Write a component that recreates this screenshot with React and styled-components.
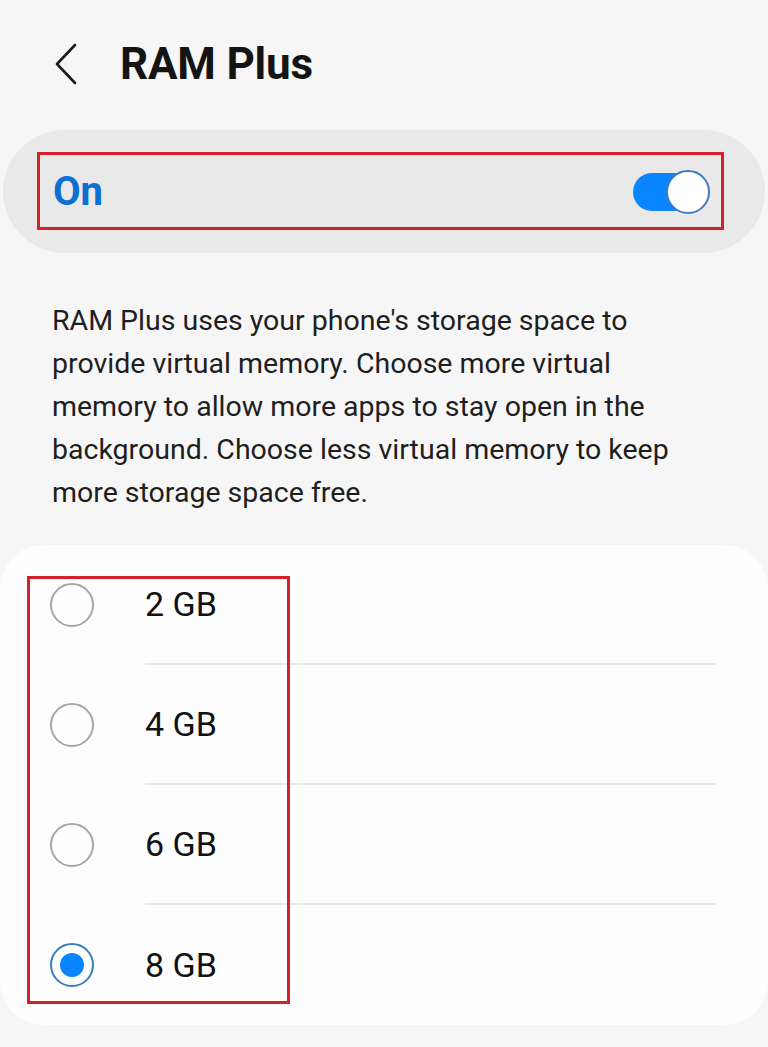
import React from "react";
import styled, { createGlobalStyle } from "styled-components";

const GlobalStyle = createGlobalStyle`
  html, body {
    margin: 0;
    padding: 0;
    background: #f6f6f6;
  }
  body {
    font-family: Roboto, "Noto Sans", "Liberation Sans", sans-serif;
    color: #1b1b1b;
  }
`;

const options = ["2 GB", "4 GB", "6 GB", "8 GB"];

const App = () => {
  const selected = "8 GB";

  return (
    <Page>
      <GlobalStyle />
      <Header>
        <BackButton aria-label="Back">
          <svg width="24" height="42" viewBox="0 0 24 42" fill="none">
            <path
              d="M21 2 L3 21 L21 40"
              stroke="#1b1b1b"
              strokeWidth="2.6"
              strokeLinecap="round"
              strokeLinejoin="round"
            />
          </svg>
        </BackButton>
        <Title>RAM Plus</Title>
      </Header>

      <TogglePill>
        <OnLabel>On</OnLabel>
        <Switch>
          <Thumb />
        </Switch>
        <Annotation $top={22} $left={34} $width={687} $height={78} />
      </TogglePill>

      <Description>
        RAM Plus uses your phone's storage space to provide virtual memory.
        Choose more virtual memory to allow more apps to stay open in the
        background. Choose less virtual memory to keep more storage space free.
      </Description>

      <OptionsCard>
        {options.map((label, i) => (
          <OptionRow key={label}>
            <RadioCell>
              <Radio $checked={label === selected} />
            </RadioCell>
            <OptionLabel $last={i === options.length - 1}>{label}</OptionLabel>
          </OptionRow>
        ))}
        <Annotation $top={31} $left={27} $width={263} $height={428} />
      </OptionsCard>
    </Page>
  );
};

export default App;

const Page = styled.div`
  width: 768px;
  min-height: 1047px;
  display: flex;
  flex-direction: column;
  background: #f6f6f6;
`;

const Header = styled.div`
  height: 128px;
  display: flex;
  align-items: center;
  padding-left: 54px;
`;

const BackButton = styled.div`
  width: 24px;
  height: 42px;
  display: flex;
  margin-right: 42px;
`;

const Title = styled.h1`
  margin: 0;
  font-size: 44px;
  font-weight: 700;
  color: #141414;
  letter-spacing: -0.2px;
`;

const TogglePill = styled.div`
  position: relative;
  height: 123px;
  margin: 2px 3px 0;
  border-radius: 62px;
  background: #e9e9e9;
  display: flex;
  align-items: center;
  justify-content: space-between;
  padding: 0 55px 0 50px;
`;

const OnLabel = styled.span`
  font-size: 40px;
  font-weight: 700;
  color: #0d6fd1;
`;

const Switch = styled.div`
  width: 72px;
  height: 38px;
  border-radius: 19px;
  background: #0a84ff;
  display: flex;
  align-items: center;
  justify-content: flex-end;
  margin-right: 5px;
`;

const Thumb = styled.div`
  width: 40px;
  height: 40px;
  border-radius: 50%;
  background: #fff;
  border: 2px solid #3f7dbd;
  margin-right: -5px;
  flex-shrink: 0;
`;

const Annotation = styled.div`
  position: absolute;
  top: ${(p) => p.$top}px;
  left: ${(p) => p.$left}px;
  width: ${(p) => p.$width}px;
  height: ${(p) => p.$height}px;
  border: 3px solid #d3222c;
  box-sizing: border-box;
  pointer-events: none;
`;

const Description = styled.p`
  margin: 46px 0 0;
  padding: 0 52px;
  font-size: 28.5px;
  line-height: 43px;
  color: #1e1e1e;
`;

const OptionsCard = styled.div`
  position: relative;
  margin-top: 31px;
  background: #fdfdfd;
  border-radius: 44px;
`;

const OptionRow = styled.div`
  height: 120px;
  display: flex;
  align-items: stretch;
`;

const RadioCell = styled.div`
  width: 145px;
  display: flex;
  align-items: center;
  padding-left: 50px;
  box-sizing: border-box;
`;

const Radio = styled.div`
  width: 44px;
  height: 44px;
  border-radius: 50%;
  box-sizing: border-box;
  border: 2px solid ${(p) => (p.$checked ? "#3a7cbd" : "#a6a6a6")};
  display: flex;
  align-items: center;
  justify-content: center;

  &::after {
    content: "";
    display: ${(p) => (p.$checked ? "block" : "none")};
    width: 24px;
    height: 24px;
    border-radius: 50%;
    background: #0a84ff;
  }
`;

const OptionLabel = styled.div`
  flex: 1;
  margin-right: 52px;
  display: flex;
  align-items: center;
  font-size: 34px;
  color: #111;
  border-bottom: ${(p) => (p.$last ? "none" : "2px solid #e8e8e8")};
`;
